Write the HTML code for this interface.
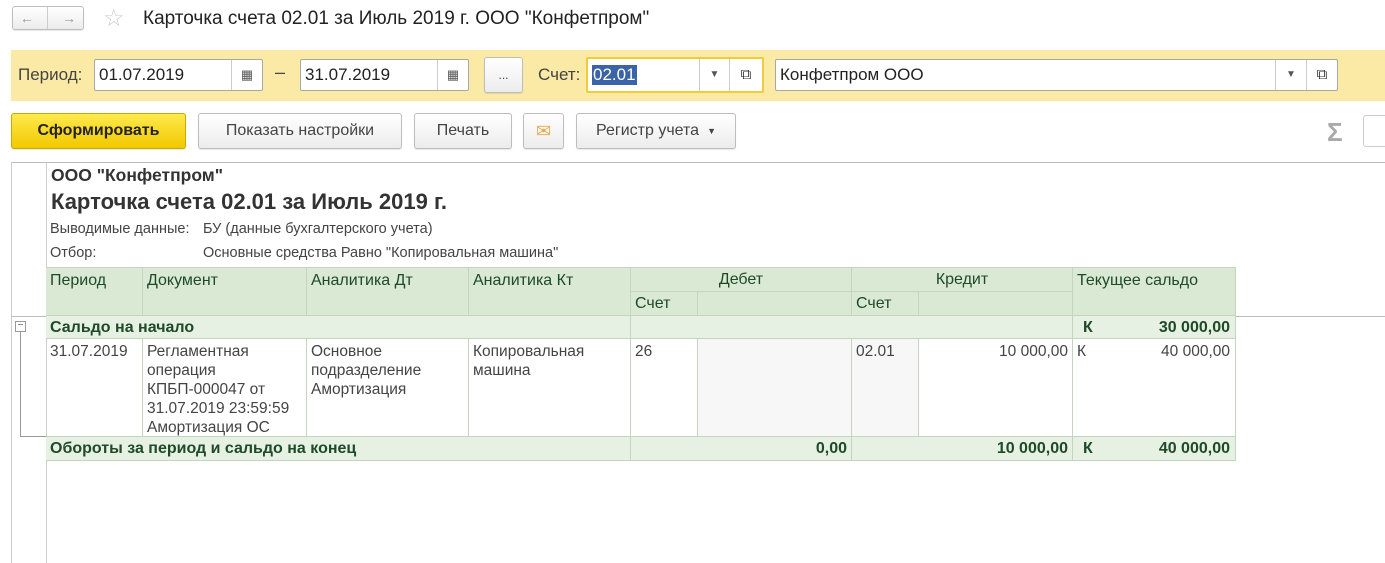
<!DOCTYPE html>
<html><head><meta charset="utf-8"><style>
*{box-sizing:border-box;margin:0;padding:0}
body{width:1385px;height:563px;background:#fff;font-family:"Liberation Sans",sans-serif;position:relative;overflow:hidden;color:#333}
.a{position:absolute}
.btn{position:absolute;border:1px solid #bdbdbd;border-radius:3px;background:linear-gradient(#fff,#ececec);font-size:16px;color:#444;display:flex;align-items:center;justify-content:center;box-shadow:0 1px 1px rgba(0,0,0,.1)}
.inp{position:absolute;background:#fff;border:1px solid #a8a8a8;border-radius:2px;font-size:17px;color:#222;padding-left:4px;display:flex;align-items:center}
.c{position:absolute;border-right:1px solid #c4d5bf;border-bottom:1px solid #c4d5bf;font-size:15px;padding:3px 4px;line-height:19px}
.h{background:#d9e9d3;color:#1e4a28;font-size:16px}
.s{background:#e7f1e3;color:#1e4a28;font-weight:bold;font-size:16px}
.d{color:#444;font-size:15.5px}
.r{text-align:right}
</style></head><body>
<div class="btn" style="left:12px;top:6px;width:72px;height:24px;color:#999;font-size:14px;justify-content:space-around">←<span style="border-left:1px solid #ccc;height:22px"></span>→</div>
<div class="a" style="left:103px;top:4px;font-size:24px;color:#ccc">☆</div>
<div class="a" style="left:143px;top:8px;font-size:19px;color:#222">Карточка счета 02.01 за Июль 2019 г. ООО "Конфетпром"</div>
<div class="a" style="left:11px;top:50px;width:1374px;height:51px;background:#fbe9a6"></div>
<div class="a" style="left:18px;top:65px;font-size:17px;color:#444">Период:</div>
<div class="inp" style="left:94px;top:59px;width:169px;height:32px">01.07.2019<span class="a" style="right:0;top:0;width:31px;height:30px;border-left:1px solid #ccc;text-align:center;font-size:13px;line-height:30px;color:#555">▦</span></div>
<div class="a" style="left:275px;top:62px;font-size:18px;color:#444">–</div>
<div class="inp" style="left:300px;top:59px;width:169px;height:32px">31.07.2019<span class="a" style="right:0;top:0;width:31px;height:30px;border-left:1px solid #ccc;text-align:center;font-size:13px;line-height:30px;color:#555">▦</span></div>
<div class="btn" style="left:484px;top:57px;width:39px;height:36px;font-size:12px">...</div>
<div class="a" style="left:538px;top:65px;font-size:17px;color:#444">Счет:</div>
<div class="inp" style="left:586px;top:57px;width:178px;height:36px;border:2px solid #f0cc3a"><span style="background:#3a63a8;color:#fff;padding:0 1px">02.01</span><span class="a" style="right:33px;top:0;width:30px;height:32px;border-left:1px solid #ccc;text-align:center;font-size:10px;line-height:32px;color:#555">▼</span><span class="a" style="right:0;top:0;width:33px;height:32px;border-left:1px solid #ccc;text-align:center;font-size:15px;line-height:32px;color:#333">⧉</span></div>
<div class="inp" style="left:775px;top:59px;width:563px;height:32px">Конфетпром ООО<span class="a" style="right:31px;top:0;width:31px;height:30px;border-left:1px solid #ccc;text-align:center;font-size:10px;line-height:30px;color:#555">▼</span><span class="a" style="right:0;top:0;width:31px;height:30px;border-left:1px solid #ccc;text-align:center;font-size:15px;line-height:30px;color:#333">⧉</span></div>
<div class="btn" style="left:11px;top:113px;width:175px;height:36px;background:linear-gradient(#ffe94d,#f2c900);border-color:#c9a800;font-weight:bold;color:#222">Сформировать</div>
<div class="btn" style="left:198px;top:113px;width:204px;height:36px">Показать настройки</div>
<div class="btn" style="left:414px;top:113px;width:98px;height:36px">Печать</div>
<div class="btn" style="left:523px;top:113px;width:41px;height:36px;color:#e8a94a;font-size:18px">✉</div>
<div class="btn" style="left:576px;top:113px;width:160px;height:36px">Регистр учета <span style="font-size:9px;margin-left:8px">▼</span></div>
<div class="a" style="left:1327px;top:117px;font-size:26px;color:#aaa;font-weight:bold">Σ</div>
<div class="a" style="left:1363px;top:115px;width:30px;height:32px;border:1px solid #ccc;border-radius:3px"></div>
<div class="a" style="left:11px;top:162px;width:1374px;border-top:1px solid #bbb"></div>
<div class="a" style="left:11px;top:162px;height:401px;border-left:1px solid #ccc"></div>
<div class="a" style="left:46px;top:162px;height:401px;border-left:1px solid #ccc"></div>
<div class="a" style="left:51px;top:165px;font-size:17.5px;font-weight:bold;color:#333">ООО "Конфетпром"</div>
<div class="a" style="left:51px;top:189px;font-size:22px;font-weight:bold;color:#333">Карточка счета 02.01 за Июль 2019 г.</div>
<div class="a d" style="left:50px;top:221px;font-size:14.5px">Выводимые данные:</div>
<div class="a d" style="left:203px;top:221px;font-size:14.5px">БУ (данные бухгалтерского учета)</div>
<div class="a d" style="left:50px;top:245px;font-size:14.5px">Отбор:</div>
<div class="a d" style="left:203px;top:245px;font-size:14.5px">Основные средства Равно "Копировальная машина"</div>
<div class="a" style="left:11px;top:316px;width:1374px;border-top:1px solid #bbb"></div>
<div class="a" style="left:15px;top:321px;width:11px;height:11px;border:1px solid #999;font-size:10px;line-height:8px;text-align:center;color:#555">−</div>
<div class="a" style="left:20px;top:332px;height:105px;border-left:1px solid #999"></div>
<div class="a" style="left:20px;top:436px;width:26px;border-top:1px solid #999"></div>
<div class="a" style="left:46px;top:267px;width:1190px;border-top:1px solid #c4d5bf"></div>
<div class="c h" style="left:46px;top:268px;width:97px;height:48px">Период</div>
<div class="c h" style="left:143px;top:268px;width:164px;height:48px">Документ</div>
<div class="c h" style="left:307px;top:268px;width:162px;height:48px">Аналитика Дт</div>
<div class="c h" style="left:469px;top:268px;width:162px;height:48px">Аналитика Кт</div>
<div class="c h" style="left:631px;top:268px;width:221px;height:24px;text-align:center;padding-top:2px">Дебет</div>
<div class="c h" style="left:852px;top:268px;width:221px;height:24px;text-align:center;padding-top:2px">Кредит</div>
<div class="c h" style="left:1073px;top:268px;width:163px;height:48px">Текущее сальдо</div>
<div class="c h" style="left:631px;top:292px;width:67px;height:24px;padding-top:2px">Счет</div>
<div class="c h" style="left:698px;top:292px;width:154px;height:24px"></div>
<div class="c h" style="left:852px;top:292px;width:67px;height:24px;padding-top:2px">Счет</div>
<div class="c h" style="left:919px;top:292px;width:154px;height:24px"></div>
<div class="c s" style="left:46px;top:316px;width:585px;height:23px;padding-top:2px">Сальдо на начало</div>
<div class="c s" style="left:631px;top:316px;width:442px;height:23px"></div>
<div class="c s" style="left:1073px;top:316px;width:163px;height:23px;padding-top:2px"><span style="margin-left:6px">К</span><span class="a" style="right:5px;top:2px">30 000,00</span></div>
<div class="c d" style="left:46px;top:339px;width:97px;height:98px">31.07.2019</div>
<div class="c d" style="left:143px;top:339px;width:164px;height:98px">Регламентная операция КПБП-000047 от 31.07.2019 23:59:59 Амортизация ОС</div>
<div class="c d" style="left:307px;top:339px;width:162px;height:98px">Основное подразделение Амортизация</div>
<div class="c d" style="left:469px;top:339px;width:162px;height:98px">Копировальная машина</div>
<div class="c d" style="left:631px;top:339px;width:67px;height:98px">26</div>
<div class="c d" style="left:698px;top:339px;width:154px;height:98px;background:#f7f7f7"></div>
<div class="c d" style="left:852px;top:339px;width:67px;height:98px;background:#f7f7f7">02.01</div>
<div class="c d r" style="left:919px;top:339px;width:154px;height:98px">10 000,00</div>
<div class="c d" style="left:1073px;top:339px;width:163px;height:98px">К<span class="a" style="right:5px;top:3px">40 000,00</span></div>
<div class="c s" style="left:46px;top:437px;width:585px;height:24px;padding-top:2px">Обороты за период и сальдо на конец</div>
<div class="c s r" style="left:631px;top:437px;width:221px;height:24px;padding-top:2px">0,00</div>
<div class="c s r" style="left:852px;top:437px;width:221px;height:24px;padding-top:2px">10 000,00</div>
<div class="c s" style="left:1073px;top:437px;width:163px;height:24px;padding-top:2px"><span style="margin-left:6px">К</span><span class="a" style="right:5px;top:2px">40 000,00</span></div>
</body></html>
